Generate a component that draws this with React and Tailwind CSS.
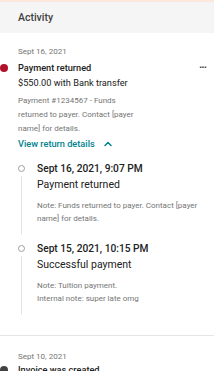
import { FiChevronUp } from 'react-icons/fi';

const SubEvent = ({ date, title, notes }) => (
  <div className="relative pl-[37px] pb-[15px]">
    <div className="absolute left-[18px] top-[4px] h-[7px] w-[7px] rounded-full border border-[#9e9e9e] bg-white" />
    <div className="absolute left-[21px] top-[15px] bottom-[7px] w-px bg-[#e3e3e3]" />
    <p className="text-[10.2px] leading-[16px] font-medium text-[#212121]">{date}</p>
    <p className="text-[10.5px] leading-[16px] text-[#212121]">{title}</p>
    <div className="pt-[7px] pb-[1px]">
      {notes.map((n) => (
        <p key={n} className="text-[8px] leading-[12.5px] text-[#757575]">{n}</p>
      ))}
    </div>
  </div>
);

const App = () => {
  return (
    <div className="w-[214px] h-[371px] overflow-hidden bg-white font-['Roboto',sans-serif]">
      <div className="h-[2px] bg-[#fde9dc]" />
      <div className="h-[31px] bg-[#f5f5f5] flex items-center px-[18px]">
        <h2 className="text-[10.5px] font-medium text-[#424242]">Activity</h2>
      </div>

      {/* Payment returned */}
      <div className="pt-[13px]">
        <p className="pl-[18px] text-[8px] leading-[12px] text-[#757575]">Sept 16, 2021</p>
        <div className="relative mt-[2px] pl-[18px] pr-[8px]">
          <div className="absolute left-[0px] top-[4px] h-[8px] w-[8px] rounded-full bg-[#b0102a]" />
          <div className="flex items-center justify-between">
            <p className="text-[9.2px] leading-[15px] font-medium text-[#212121]">Payment returned</p>
            <span className="text-[11px] leading-[15px] font-bold text-[#424242] tracking-[-1px]">···</span>
          </div>
          <p className="text-[9.2px] leading-[15px] text-[#212121]">$550.00 with Bank transfer</p>
          <div className="mt-[4px] w-[122px]">
            <p className="text-[8px] leading-[14px] text-[#757575]">
              Payment #1234567 - Funds returned to payer. Contact [payer name] for details.
            </p>
          </div>
          <button className="flex items-center gap-[7px] text-[9.2px] leading-[15px] font-medium text-[#00838f]">
            View return details
            <FiChevronUp className="h-[12px] w-[12px] stroke-[3]" />
          </button>
        </div>

        <div className="mt-[10px]">
          <SubEvent
            date="Sept 16, 2021, 9:07 PM"
            title="Payment returned"
            notes={['Note: Funds returned to payer. Contact [payer', 'name] for details.']}
          />
          <SubEvent
            date="Sept 15, 2021, 10:15 PM"
            title="Successful payment"
            notes={['Note: Tuition payment.', 'Internal note: super late omg']}
          />
        </div>
      </div>

      <div className="mt-[14px] h-px bg-[#e6e6e6]" />

      <div className="pt-[15px]">
        <p className="pl-[18px] text-[8px] leading-[12px] text-[#757575]">Sept 10, 2021</p>
        <div className="relative pl-[18px]">
          <div className="absolute left-[0px] top-[3px] h-[8px] w-[8px] rounded-full bg-[#424242]" />
          <p className="text-[9.2px] leading-[14px] font-medium text-[#212121]">Invoice was created</p>
        </div>
      </div>
    </div>
  );
};

export default App;
